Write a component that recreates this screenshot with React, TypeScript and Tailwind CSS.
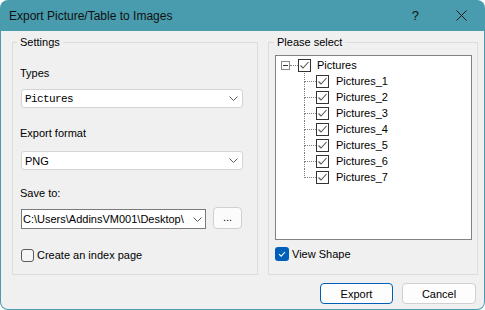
import React from 'react';

const items = ['Pictures_1', 'Pictures_2', 'Pictures_3', 'Pictures_4', 'Pictures_5', 'Pictures_6', 'Pictures_7'];

function Chevron() {
  return (
    <svg width="9" height="5" viewBox="0 0 9 5" className="shrink-0">
      <path d="M0.5 0.5 L4.5 4.5 L8.5 0.5" fill="none" stroke="#5a5a5a" strokeWidth="1" />
    </svg>
  );
}

function TreeCheck() {
  return (
    <span className="w-[13px] h-[13px] border border-[#333] bg-white flex items-center justify-center shrink-0">
      <svg width="11" height="11" viewBox="0 0 11 11">
        <path d="M1.5 5.5 L4 8 L9.5 2" fill="none" stroke="#555" strokeWidth="1.1" />
      </svg>
    </span>
  );
}

export default function App() {
  return (
    <div className="w-[485px] h-[310px] bg-white font-['Liberation_Sans',Arial,sans-serif] text-[11px] leading-[14px] text-black">
      <div className="w-full h-full bg-[#489cad] rounded-[8px] flex flex-col px-[1px] pb-[1px]">
        {/* title bar */}
        <div className="h-[31px] flex items-center pl-[8px] shrink-0">
          <span className="text-[12px] text-[#111]">Export Picture/Table to Images</span>
          <span className="ml-auto text-[13px] text-[#111] mr-[37px]">?</span>
          <svg width="11" height="11" viewBox="0 0 11 11" className="mr-[17px]">
            <path d="M0.5 0.5 L10.5 10.5 M10.5 0.5 L0.5 10.5" stroke="#1a1a1a" strokeWidth="1" />
          </svg>
        </div>

        <div className="flex-1 bg-[#f0f0f0] rounded-b-[7px] flex flex-col pl-[11px] pr-[6px] pt-[11px]">
          <div className="flex gap-[10px]">
            {/* Settings */}
            <div className="relative w-[246px] h-[233px] shrink-0 border border-[#dcdcdc] pl-[7px] pr-[14px] pt-[23px]">
              <span className="absolute top-[-8px] left-[4px] px-[3px] bg-[#f0f0f0]">Settings</span>
              <div>Types</div>
              <div className="mt-[9px] ml-[1px] h-[19px] bg-white border border-[#d4d4d4] rounded-[3px] flex items-center pl-[3px] pr-[4px]">
                <span className="font-['Liberation_Mono',monospace] tracking-[-0.6px]">Pictures</span>
                <span className="ml-auto"><Chevron /></span>
              </div>
              <div className="mt-[18px]">Export format</div>
              <div className="mt-[11px] ml-[1px] h-[19px] bg-white border border-[#d4d4d4] rounded-[3px] flex items-center pl-[3px] pr-[4px]">
                <span>PNG</span>
                <span className="ml-auto"><Chevron /></span>
              </div>
              <div className="mt-[16px]">Save to:</div>
              <div className="mt-[7px] ml-[1px] h-[22px] flex items-end">
                <div className="w-[185px] h-[20px] bg-white border border-[#7a7a7a] flex items-center pl-[1px] pr-[3px]">
                  <span className="w-[166px] overflow-hidden whitespace-nowrap">C:\Users\AddinsVM001\Desktop\</span>
                  <span className="ml-auto"><Chevron /></span>
                </div>
                <button className="ml-[7px] w-[29px] h-[22px] bg-[#fbfbfb] border border-[#d0d0d0] rounded-[4px] flex items-center justify-center pb-[3px]">
                  ...
                </button>
              </div>
              <label className="mt-[19px] ml-[1px] flex items-center h-[14px]">
                <span className="w-[13px] h-[13px] border border-[#5c5c5c] rounded-[3px] bg-[#f6f6f6]" />
                <span className="ml-[3px]">Create an index page</span>
              </label>
            </div>

            {/* Please select */}
            <div className="relative w-[210px] h-[233px] shrink-0 border border-[#dcdcdc] pl-[6px] pt-[12px]">
              <span className="absolute top-[-8px] left-[5px] px-[3px] bg-[#f0f0f0]">Please select</span>
              <div className="w-[197px] h-[185px] bg-white border border-[#828282] pt-[1px]">
                <div className="h-[16px] flex items-center">
                  <span className="ml-[5px] w-[9px] h-[9px] border border-[#8a8a8a] bg-white flex items-center justify-center">
                    <span className="w-[5px] h-[1px] bg-[#333]" />
                  </span>
                  <span className="w-[8px] border-t border-dotted border-[#808080]" />
                  <TreeCheck />
                  <span className="ml-[6px]">Pictures</span>
                </div>
                {items.map((it, i) => (
                  <div key={it} className="h-[16px] flex pl-[28px]">
                    <div className="w-[12px] flex flex-col">
                      <div className="h-[9px] border-l border-b border-dotted border-[#808080]" />
                      {i < items.length - 1 && <div className="h-[7px] border-l border-dotted border-[#808080]" />}
                    </div>
                    <div className="flex items-center">
                      <TreeCheck />
                      <span className="ml-[7px]">{it}</span>
                    </div>
                  </div>
                ))}
              </div>
              <label className="mt-[7px] flex items-center h-[14px]">
                <span className="w-[14px] h-[14px] rounded-[3px] bg-[#005fb8] flex items-center justify-center">
                  <svg width="10" height="10" viewBox="0 0 10 10">
                    <path d="M2 5.2 L4.2 7.2 L8 3" fill="none" stroke="#fff" strokeWidth="1.1" />
                  </svg>
                </span>
                <span className="ml-[3px]">View Shape</span>
              </label>
            </div>
          </div>

          <div className="mt-[8px] flex justify-end gap-[9px] mr-[2px]">
            <button className="w-[73px] h-[21px] bg-[#fdfdfd] border border-[#005fb8] rounded-[4px]">Export</button>
            <button className="w-[74px] h-[21px] bg-[#fdfdfd] border border-[#d0d0d0] rounded-[4px]">Cancel</button>
          </div>
        </div>
      </div>
    </div>
  );
}
